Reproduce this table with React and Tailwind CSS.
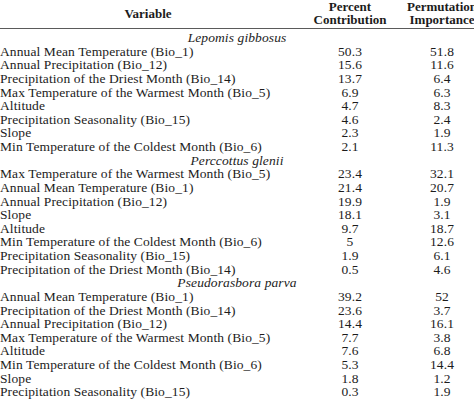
import React from 'react';

const groups = [
  {
    name: 'Lepomis gibbosus',
    rows: [
      ['Annual Mean Temperature (Bio_1)', '50.3', '51.8'],
      ['Annual Precipitation (Bio_12)', '15.6', '11.6'],
      ['Precipitation of the Driest Month (Bio_14)', '13.7', '6.4'],
      ['Max Temperature of the Warmest Month (Bio_5)', '6.9', '6.3'],
      ['Altitude', '4.7', '8.3'],
      ['Precipitation Seasonality (Bio_15)', '4.6', '2.4'],
      ['Slope', '2.3', '1.9'],
      ['Min Temperature of the Coldest Month (Bio_6)', '2.1', '11.3'],
    ],
  },
  {
    name: 'Perccottus glenii',
    rows: [
      ['Max Temperature of the Warmest Month (Bio_5)', '23.4', '32.1'],
      ['Annual Mean Temperature (Bio_1)', '21.4', '20.7'],
      ['Annual Precipitation (Bio_12)', '19.9', '1.9'],
      ['Slope', '18.1', '3.1'],
      ['Altitude', '9.7', '18.7'],
      ['Min Temperature of the Coldest Month (Bio_6)', '5', '12.6'],
      ['Precipitation Seasonality (Bio_15)', '1.9', '6.1'],
      ['Precipitation of the Driest Month (Bio_14)', '0.5', '4.6'],
    ],
  },
  {
    name: 'Pseudorasbora parva',
    rows: [
      ['Annual Mean Temperature (Bio_1)', '39.2', '52'],
      ['Precipitation of the Driest Month (Bio_14)', '23.6', '3.7'],
      ['Annual Precipitation (Bio_12)', '14.4', '16.1'],
      ['Max Temperature of the Warmest Month (Bio_5)', '7.7', '3.8'],
      ['Altitude', '7.6', '6.8'],
      ['Min Temperature of the Coldest Month (Bio_6)', '5.3', '14.4'],
      ['Slope', '1.8', '1.2'],
      ['Precipitation Seasonality (Bio_15)', '0.3', '1.9'],
    ],
  },
];

export default function App() {
  return (
    <div className="w-[474px] h-[404px] overflow-hidden bg-white text-[#1c1c1c] font-['Liberation_Serif',serif] text-[13.5px] tracking-[0.1px]">
      <div className="w-[484px]">
        <div className="grid grid-cols-[296px_108px_76px] h-[29px] items-center pb-[7px] font-bold leading-[13px] tracking-normal text-[13px] border-b border-[#5a5a5a]">
          <div className="text-center">Variable</div>
          <div className="text-center">Percent<br />Contribution</div>
          <div className="text-center">Permutation<br />Importance</div>
        </div>
        <div className="pt-[2px]">
          {groups.map((g) => (
            <div key={g.name}>
              <div className="w-[474px] h-[13.63px] leading-[13.63px] text-center italic">{g.name}</div>
              {g.rows.map((r, i) => (
                <div key={i} className="grid grid-cols-[296px_108px_76px] h-[13.63px] leading-[13.63px]">
                  <div className="whitespace-nowrap">{r[0]}</div>
                  <div className="text-center">{r[1]}</div>
                  <div className="text-center">{r[2]}</div>
                </div>
              ))}
            </div>
          ))}
        </div>
      </div>
    </div>
  );
}
